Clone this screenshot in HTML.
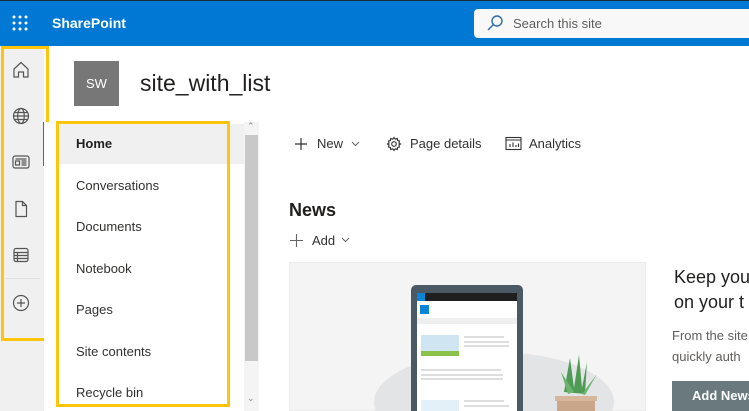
<!DOCTYPE html>
<html><head><meta charset="utf-8"><style>
*{margin:0;padding:0;box-sizing:border-box}
html,body{width:749px;height:411px;overflow:hidden}
body{font-family:"Segoe UI","Liberation Sans",sans-serif;background:#fff;position:relative;color:#323130}
.a{position:absolute}
.top{left:0;top:0;width:749px;height:46px;background:#0078d4;border-top:1px solid #1b2a3a}
.t{white-space:nowrap}
.nav{font-size:13px;color:#323130;left:76px}
</style></head><body>
<div class="a top"></div>
<svg class="a" style="left:12px;top:15px" width="18" height="18"><g fill="#fff"><circle cx="2" cy="2" r="1.5"/><circle cx="8" cy="2" r="1.5"/><circle cx="14" cy="2" r="1.5"/><circle cx="2" cy="8" r="1.5"/><circle cx="8" cy="8" r="1.5"/><circle cx="14" cy="8" r="1.5"/><circle cx="2" cy="14" r="1.5"/><circle cx="8" cy="14" r="1.5"/><circle cx="14" cy="14" r="1.5"/></g></svg>
<div class="a t" style="left:52px;top:15px;color:#fff;font-weight:bold;font-size:14px">SharePoint</div>
<div class="a" style="left:474px;top:9px;width:275px;height:29px;background:#f8f8f8;border-radius:4px 0 0 4px"></div>
<svg class="a" style="left:486px;top:14px" width="18" height="18"><circle cx="11" cy="7" r="5" fill="none" stroke="#2b6cb0" stroke-width="1.4"/><path d="M7.5 10.5L2 16" stroke="#2b6cb0" stroke-width="1.4"/></svg>
<div class="a t" style="left:513px;top:16px;font-size:13px;color:#605e5c">Search this site</div>
<!-- rail -->
<div class="a" style="left:0;top:46px;width:44px;height:365px;background:#f0f0f0"></div>
<div class="a" style="left:6px;top:278px;width:34px;height:1px;background:#e0e0e0"></div>
<div class="a" style="left:43px;top:122px;width:2px;height:44px;background:#5a6570"></div>
<svg class="a" style="left:11px;top:60px" width="20" height="20" fill="none" stroke="#555" stroke-width="1.2"><path d="M3 9L10 2.5 17 9V17H12.5V12H7.5V17H3Z"/></svg>
<svg class="a" style="left:11px;top:106px" width="20" height="20" fill="none" stroke="#555" stroke-width="1.2"><circle cx="10" cy="10" r="7.5"/><ellipse cx="10" cy="10" rx="3.3" ry="7.5"/><path d="M2.5 10H17.5M3.5 6.5H16.5M3.5 13.5H16.5"/></svg>
<svg class="a" style="left:11px;top:152px" width="20" height="20" fill="none" stroke="#555" stroke-width="1.2"><rect x="2" y="4" width="16" height="12" rx="2"/><rect x="4.5" y="9" width="4" height="4"/><path d="M10.5 9H15.5M10.5 11H15.5M10.5 13H15.5M4.5 7H15.5"/></svg>
<svg class="a" style="left:11px;top:199px" width="20" height="20" fill="none" stroke="#555" stroke-width="1.2"><path d="M5 2.5H11.5L15.5 6.5V17.5H5Z M11.5 2.5V6.5H15.5"/></svg>
<svg class="a" style="left:11px;top:245px" width="20" height="20" fill="none" stroke="#555" stroke-width="1.2"><rect x="3" y="3.5" width="14" height="13" rx="2"/><path d="M3 7.5H17M3 10.5H17M3 13.5H17M6.5 7.5V16.5"/></svg>
<svg class="a" style="left:11px;top:293px" width="20" height="20" fill="none" stroke="#555" stroke-width="1.2"><circle cx="10" cy="10" r="7.5"/><path d="M10 6V14M6 10H14"/></svg>
<div class="a" style="left:1px;top:46px;width:48px;height:295px;border:3px solid #ffc50c"></div>
<!-- header -->
<div class="a" style="left:74px;top:61px;width:45px;height:45px;background:#777;color:#fff;font-size:13px;text-align:center;line-height:45px">SW</div>
<div class="a t" style="left:140px;top:70px;font-size:23px;color:#201f1e">site_with_list</div>
<!-- nav -->
<div class="a" style="left:44px;top:122px;width:214px;height:289px;background:#fff"></div>
<div class="a" style="left:56px;top:124px;width:188px;height:40px;background:#f0f0f0"></div>
<div class="a" style="left:244px;top:122px;width:15px;height:289px;background:#f4f4f4"></div>
<div class="a" style="left:245px;top:135px;width:13px;height:226px;background:#c8c8c8"></div>
<div class="a t" style="left:247px;top:121px;font-size:9px;color:#888">&#8963;</div>
<div class="a t" style="left:247px;top:393px;font-size:9px;color:#888">&#8964;</div>
<div class="a t nav" style="top:136px;font-weight:600;color:#201f1e">Home</div>
<div class="a t nav" style="top:178px">Conversations</div>
<div class="a t nav" style="top:219px">Documents</div>
<div class="a t nav" style="top:261px">Notebook</div>
<div class="a t nav" style="top:302px">Pages</div>
<div class="a t nav" style="top:344px">Site contents</div>
<div class="a t nav" style="top:385px">Recycle bin</div>
<div class="a" style="left:56px;top:121px;width:174px;height:286px;border:3px solid #ffc50c"></div>
<!-- commands -->
<svg class="a" style="left:294px;top:137px" width="14" height="14" stroke="#323130" stroke-width="1.2"><path d="M7 1V13M1 7H13"/></svg>
<div class="a t" style="left:317px;top:136px;font-size:13px">New</div>
<svg class="a" style="left:351px;top:141px" width="9" height="6" fill="none" stroke="#666"><path d="M1 1L4.5 4.5 8 1"/></svg>
<svg class="a" style="left:386px;top:136px" width="16" height="16" fill="none" stroke="#323130" stroke-width="1.1"><circle cx="8" cy="8" r="2.3"/><path d="M8 1.5L9.3 3.2 11.3 2.5 11.6 4.5 13.5 5 12.9 7 14.5 8 12.9 9 13.5 11 11.6 11.5 11.3 13.5 9.3 12.8 8 14.5 6.7 12.8 4.7 13.5 4.4 11.5 2.5 11 3.1 9 1.5 8 3.1 7 2.5 5 4.4 4.5 4.7 2.5 6.7 3.2Z"/></svg>
<div class="a t" style="left:410px;top:136px;font-size:13px">Page details</div>
<svg class="a" style="left:505px;top:136px" width="17" height="15" fill="none" stroke="#323130" stroke-width="1.1"><rect x="1" y="1.5" width="15" height="12"/><path d="M1 4H16M5 11V8M8 11V6.5M11 11V9M13.5 11V7.5"/></svg>
<div class="a t" style="left:529px;top:136px;font-size:13px">Analytics</div>
<!-- news -->
<div class="a t" style="left:289px;top:200px;font-size:18px;font-weight:600;color:#201f1e">News</div>
<svg class="a" style="left:290px;top:234px" width="13" height="13" stroke="#666" stroke-width="1.1"><path d="M6.5 0V13M0 6.5H13"/></svg>
<div class="a t" style="left:312px;top:233px;font-size:13px;color:#323130">Add</div>
<svg class="a" style="left:341px;top:237px" width="9" height="6" fill="none" stroke="#666"><path d="M1 1L4.5 4.5 8 1"/></svg>
<div class="a" style="left:289px;top:262px;width:357px;height:149px;background:#f4f4f4;border:1px solid #ececec"></div>
<svg class="a" style="left:289px;top:262px" width="357" height="149">
<ellipse cx="205" cy="140" rx="120" ry="50" fill="#e3e4e6"/>
<rect x="122" y="23" width="112" height="140" rx="5" fill="#4a5964"/>
<rect x="128" y="31" width="100" height="8" fill="#1f1f1f"/><rect x="128" y="31" width="8" height="8" fill="#0a84d6"/>
<rect x="128" y="39" width="100" height="120" fill="#fff"/>
<rect x="131" y="43" width="9" height="9" fill="#0a84d6"/>
<rect x="128" y="56" width="100" height="6" fill="#efefef"/>
<rect x="132" y="73" width="38" height="20" fill="#cfe6f2"/><rect x="132" y="89" width="38" height="5" fill="#8bc34a"/>
<g fill="#ddd"><rect x="175" y="74" width="40" height="2"/><rect x="175" y="79" width="45" height="2"/><rect x="175" y="83" width="45" height="2"/><rect x="132" y="107" width="80" height="2"/><rect x="132" y="112" width="82" height="2"/><rect x="132" y="116" width="82" height="2"/><rect x="175" y="138" width="40" height="2"/><rect x="175" y="143" width="45" height="2"/></g>
<rect x="132" y="138" width="38" height="14" fill="#e4f0f8"/>
<path d="M275 130L281 96 285 126 290 93 293 126 298 100 296 132Z" fill="#4f9a55"/>
<path d="M279 132L272 110 285 130Z M293 132L308 112 296 133Z" fill="#6bb56e"/>
<rect x="268" y="137" width="38" height="14" fill="#c9a68a"/><rect x="266" y="134" width="42" height="5" fill="#d7b79c"/>
</svg>
<div class="a t" style="left:674px;top:265px;font-size:18px;line-height:25px;color:#201f1e">Keep your<br>on your t</div>
<div class="a t" style="left:672px;top:325px;font-size:13px;line-height:21px;color:#605e5c">From the site<br>quickly auth</div>
<div class="a t" style="left:672px;top:381px;width:77px;height:30px;background:#69797e;color:#fff;font-size:13px;font-weight:600;padding:7px 0 0 20px;overflow:hidden">Add News</div>
</body></html>
